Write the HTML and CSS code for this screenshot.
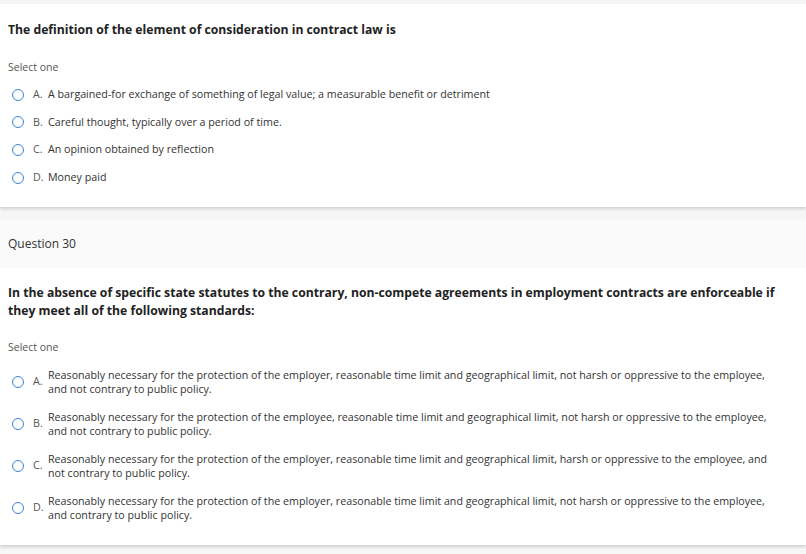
FILE: index.html
```html
<!DOCTYPE html>
<html>
<head>
<meta charset="utf-8">
<link rel="stylesheet" href="styles.css">
</head>
<body>
<div class="page">
  <section class="card card-one">
    <div class="body">
      <h2 class="qtext">The definition of the element of consideration in contract law is</h2>
      <div class="prompt">Select one</div>
      <div class="answers single">
        <label class="opt"><span class="radio"></span><span class="letter">A.</span><span class="atext">A bargained-for exchange of something of legal value; a measurable benefit or detriment</span></label>
        <label class="opt"><span class="radio"></span><span class="letter">B.</span><span class="atext">Careful thought, typically over a period of time.</span></label>
        <label class="opt"><span class="radio"></span><span class="letter">C.</span><span class="atext">An opinion obtained by reflection</span></label>
        <label class="opt"><span class="radio"></span><span class="letter">D.</span><span class="atext">Money paid</span></label>
      </div>
    </div>
  </section>
  <section class="card card-two">
    <div class="qhead">Question 30</div>
    <div class="body body-two">
      <h2 class="qtext qtext-two">In the absence of specific state statutes to the contrary, non-compete agreements in employment contracts are enforceable if they meet all of the following standards:</h2>
      <div class="prompt prompt-two">Select one</div>
      <div class="answers double">
        <label class="opt"><span class="radio"></span><span class="letter">A.</span><span class="atext">Reasonably necessary for the protection of the employer, reasonable time limit and geographical limit, not harsh or oppressive to the employee, and not contrary to public policy.</span></label>
        <label class="opt"><span class="radio"></span><span class="letter">B.</span><span class="atext">Reasonably necessary for the protection of the employee, reasonable time limit and geographical limit, not harsh or oppressive to the employee, and not contrary to public policy.</span></label>
        <label class="opt"><span class="radio"></span><span class="letter">C.</span><span class="atext">Reasonably necessary for the protection of the employer, reasonable time limit and geographical limit, harsh or oppressive to the employee, and not contrary to public policy.</span></label>
        <label class="opt"><span class="radio"></span><span class="letter">D.</span><span class="atext">Reasonably necessary for the protection of the employer, reasonable time limit and geographical limit, not harsh or oppressive to the employee, and contrary to public policy.</span></label>
      </div>
    </div>
  </section>
</div>
</body>
</html>
```
FILE: styles.css
```css
* { box-sizing: border-box; }
html, body { margin: 0; padding: 0; }
body {
  background: #f6f6f6;
  font-family: "Open Sans", "Liberation Sans", sans-serif;
  color: #333;
  width: 806px;
  height: 554px;
  overflow: hidden;
}
.page {
  padding-top: 4px;
  display: flex;
  flex-direction: column;
  gap: 12px;
}
.card {
  background: #fff;
  box-shadow: 0 2px 3px rgba(0,0,0,0.16);
}
.card-one { height: 203px; }
.card-two { height: 326px; }
.body { padding: 17px 8px 0 8px; }
.qtext {
  margin: 0;
  font-size: 12.2px;
  font-weight: 700;
  line-height: 18px;
  color: #222;
}
.prompt {
  margin-top: 21px;
  font-size: 10.5px;
  line-height: 15px;
  color: #555;
}
.answers { display: flex; flex-direction: column; }
.single { margin-top: 12px; gap: 12.7px; }
.opt {
  display: flex;
  align-items: center;
  font-size: 10.7px;
  line-height: 15px;
  color: #333;
}
.radio {
  width: 12px;
  height: 12px;
  border: 1.6px solid #3d83d9;
  border-radius: 50%;
  margin-left: 4px;
  flex: none;
}
.letter {
  width: 15px;
  margin-left: 9px;
  flex: none;
  color: #555;
}
.double .opt { line-height: 14px; }
.double .letter { position: relative; top: -1px; }
.atext { flex: 1; }
.qhead {
  height: 49px;
  background: #fafafa;
  padding: 16px 8px 0 8px;
  font-size: 12px;
  line-height: 17px;
  color: #333;
}
.body-two { padding-top: 16px; }
.prompt-two { margin-top: 20px; }
.double { margin-top: 13px; gap: 14px; }
.double .atext { padding-right: 18px; }
```
